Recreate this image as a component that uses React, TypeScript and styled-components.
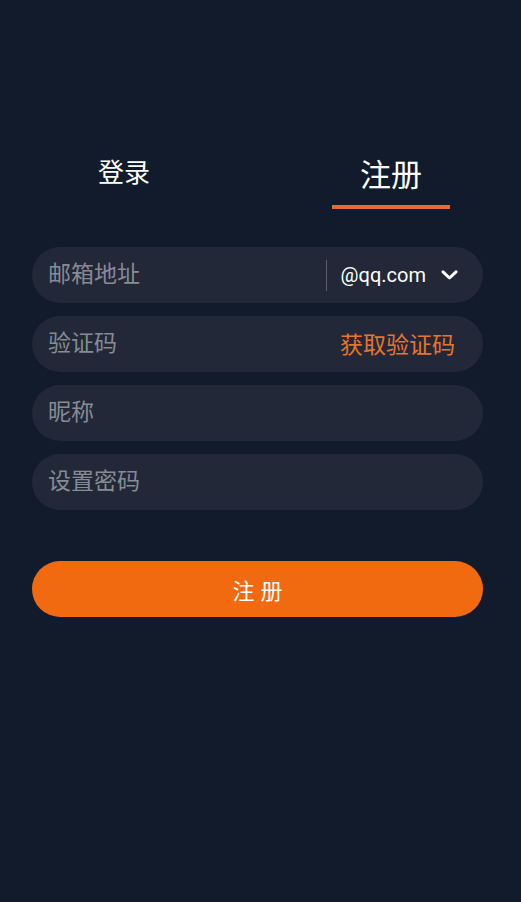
import React from "react";
import styled, { createGlobalStyle } from "styled-components";

const GlobalStyle = createGlobalStyle`
  html, body {
    margin: 0;
    padding: 0;
    background: #121b2b;
  }
  body {
    font-family: Roboto, "Noto Sans CJK SC", sans-serif;
  }
  * { box-sizing: border-box; }
`;

const Page = styled.div`
  min-height: 902px;
  width: 521px;
  background: #121b2b;
  display: flex;
  flex-direction: column;
`;

const TabBar = styled.div`
  margin-top: 140px;
  padding: 0 71px 0 65px;
  display: flex;
  justify-content: space-between;
`;

const Tab = styled.div`
  width: 118px;
  display: flex;
  flex-direction: column;
  align-items: center;
  cursor: pointer;
`;

const TabLabel = styled.div<{ $active?: boolean }>`
  height: 64px;
  display: flex;
  align-items: center;
  color: #ffffff;
  font-family: "Noto Sans CJK SC", sans-serif;
  font-size: ${(p) => (p.$active ? "31px" : "26px")};
  line-height: 1;
  padding-bottom: ${(p) => (p.$active ? "0" : "2px")};
`;

const Underline = styled.div<{ $active?: boolean }>`
  margin-top: 1px;
  width: 118px;
  height: 4px;
  background: ${(p) => (p.$active ? "#e2702b" : "transparent")};
`;

const Form = styled.div`
  margin: 38px 38px 0 32px;
  display: flex;
  flex-direction: column;
  gap: 13px;
`;

const Field = styled.div`
  height: 56px;
  border-radius: 28px;
  background: #222838;
  display: flex;
  align-items: center;
  padding: 0 28px 0 16px;
`;

const Input = styled.input`
  flex: 1;
  min-width: 0;
  border: none;
  outline: none;
  background: transparent;
  color: #ffffff;
  font-family: "Noto Sans CJK SC", sans-serif;
  font-size: 23px;
  padding: 0 0 7px 0;
  &::placeholder {
    color: #878b94;
  }
`;

const Divider = styled.div`
  width: 1px;
  height: 31px;
  background: #5b606b;
  margin: 0 14px 0 10px;
`;

const Domain = styled.div`
  display: flex;
  align-items: center;
  gap: 15px;
  color: #ffffff;
  font-family: Roboto, sans-serif;
  font-size: 20px;
  margin-right: -3px;
  padding-bottom: 1px;
`;

const CodeButton = styled.button`
  border: none;
  background: transparent;
  padding: 0 0 2px 0;
  color: #e8742c;
  font-family: "Noto Sans CJK SC", sans-serif;
  font-size: 23px;
  cursor: pointer;
`;

const Submit = styled.button`
  margin: 51px 38px 0 32px;
  height: 56px;
  border: none;
  border-radius: 28px;
  background: #f26a0f;
  color: #ffffff;
  font-family: "Noto Sans CJK SC", sans-serif;
  font-size: 22px;
  letter-spacing: 6px;
  text-indent: 6px;
  cursor: pointer;
`;

const Chevron = () => (
  <svg width="17" height="10" viewBox="0 0 17 10" fill="none">
    <polyline
      points="2,1.8 8.5,8 15,1.8"
      stroke="#ffffff"
      strokeWidth="3"
      strokeLinecap="round"
      strokeLinejoin="round"
    />
  </svg>
);

export default function App() {
  return (
    <>
      <GlobalStyle />
      <Page>
        <TabBar>
          <Tab>
            <TabLabel>登录</TabLabel>
            <Underline />
          </Tab>
          <Tab>
            <TabLabel $active>注册</TabLabel>
            <Underline $active />
          </Tab>
        </TabBar>
        <Form>
          <Field>
            <Input placeholder="邮箱地址" />
            <Divider />
            <Domain>
              @qq.com
              <Chevron />
            </Domain>
          </Field>
          <Field>
            <Input placeholder="验证码" />
            <CodeButton>获取验证码</CodeButton>
          </Field>
          <Field>
            <Input placeholder="昵称" />
          </Field>
          <Field>
            <Input placeholder="设置密码" type="password" />
          </Field>
        </Form>
        <Submit>注册</Submit>
      </Page>
    </>
  );
}
